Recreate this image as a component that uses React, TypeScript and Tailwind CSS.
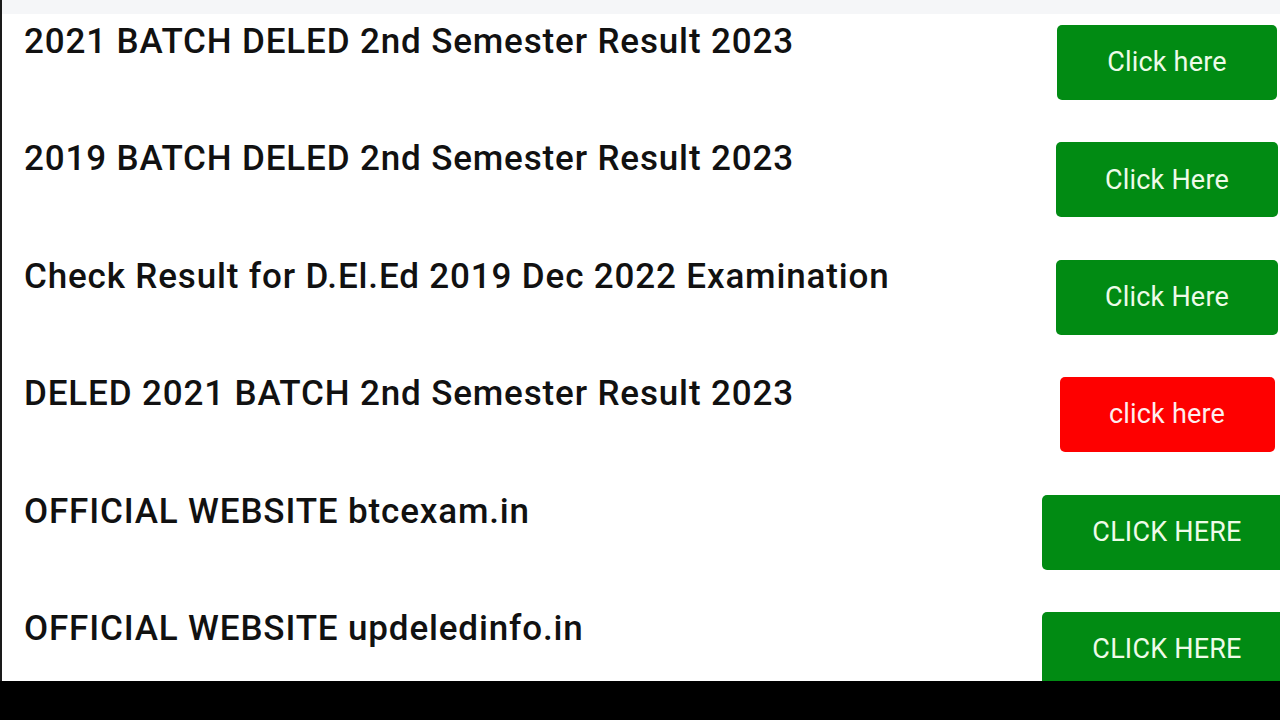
const rows = [
  { title: '2021 BATCH DELED 2nd Semester Result 2023', label: 'Click here', red: false, w: 'w-[220px]' },
  { title: '2019 BATCH DELED 2nd Semester Result 2023', label: 'Click Here', red: false, w: 'w-[222px]' },
  { title: 'Check Result for D.El.Ed 2019 Dec 2022 Examination', label: 'Click Here', red: false, w: 'w-[222px]' },
  { title: 'DELED 2021 BATCH 2nd Semester Result 2023', label: 'click here', red: true, w: 'w-[215px]' },
  { title: 'OFFICIAL WEBSITE btcexam.in', label: 'CLICK HERE', red: false, w: 'w-[250px]' },
  { title: 'OFFICIAL WEBSITE updeledinfo.in', label: 'CLICK HERE', red: false, w: 'w-[250px]' },
];

export default function App() {
  return (
    <div className="flex h-screen w-full flex-col overflow-hidden bg-black font-['Roboto',sans-serif]">
      <div className="h-[681px] shrink-0 overflow-hidden border-l-2 border-[#1a1a1a] bg-white">
        <div className="h-[14px] bg-[#f5f6f8]" />
        {rows.map((row) => (
          <div key={row.title} className="flex h-[117.4px] items-start justify-between">
            <h2 className="whitespace-nowrap pl-[22px] pt-[8px] text-[35px] font-medium leading-[40px] tracking-[0.85px] text-[#111]">
              {row.title}
            </h2>
            <div className="flex w-[226px] shrink-0 justify-center pt-[11px]">
              <a
                href="#"
                className={`${row.w} flex h-[75px] shrink-0 items-center justify-center rounded-[5px] text-[27px] tracking-[0.2px] ${
                  row.red ? 'bg-[#fe0000] text-[#fdeeee]' : 'bg-[#018b13] text-[#eefbe8]'
                }`}
              >
                {row.label}
              </a>
            </div>
          </div>
        ))}
      </div>
    </div>
  );
}
